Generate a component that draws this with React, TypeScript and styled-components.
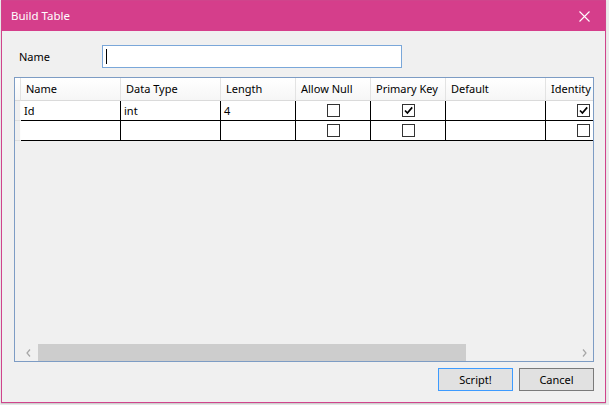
import React from 'react';
import styled, { createGlobalStyle } from 'styled-components';

const GlobalStyle = createGlobalStyle`
  html, body {
    margin: 0;
    padding: 0;
    background: #ececec;
  }
  body {
    font-family: 'Noto Sans', 'DejaVu Sans', sans-serif;
    font-size: 11px;
    color: #000;
  }
`;

interface IColumn {
  title: string;
  width: number;
  kind: 'text' | 'check';
  key: keyof IRow;
}

interface IRow {
  name: string;
  type: string;
  length: string;
  allowNull: boolean;
  primaryKey: boolean;
  defaultValue: string;
  identity: boolean;
}

const columns: IColumn[] = [
  { title: 'Name', width: 100, kind: 'text', key: 'name' },
  { title: 'Data Type', width: 100, kind: 'text', key: 'type' },
  { title: 'Length', width: 75, kind: 'text', key: 'length' },
  { title: 'Allow Null', width: 75, kind: 'check', key: 'allowNull' },
  { title: 'Primary Key', width: 75, kind: 'check', key: 'primaryKey' },
  { title: 'Default', width: 100, kind: 'text', key: 'defaultValue' },
  { title: 'Identity', width: 75, kind: 'check', key: 'identity' },
];

const rows: IRow[] = [
  { name: 'Id', type: 'int', length: '4', allowNull: false, primaryKey: true, defaultValue: '', identity: true },
  { name: '', type: '', length: '', allowNull: false, primaryKey: false, defaultValue: '', identity: false },
];

const CheckBox = ({ checked }: { checked: boolean }) => (
  <StyledCheckBox>
    {checked && (
      <svg width="11" height="11" viewBox="0 0 11 11">
        <path d="M2 5.5 L4.4 8 L9.2 2.4" fill="none" stroke="#000" strokeWidth="1.7" />
      </svg>
    )}
  </StyledCheckBox>
);

const Chevron = ({ dir }: { dir: 'left' | 'right' }) => (
  <svg width="5" height="8" viewBox="0 0 5 8">
    <path
      d={dir === 'left' ? 'M4 0.5 L1 4 L4 7.5' : 'M1 0.5 L4 4 L1 7.5'}
      fill="none"
      stroke="#a6a6a6"
      strokeWidth="1.2"
    />
  </svg>
);

export default function App() {
  const template = `6px ${columns.map((c) => `${c.width}px`).join(' ')}`;

  return (
    <>
      <GlobalStyle />
      <Screen>
        <Window>
          <TitleBar>
            <Title>Build Table</Title>
            <CloseButton>
              <svg width="11" height="11" viewBox="0 0 11 11">
                <path d="M0.5 0.5 L10.5 10.5 M10.5 0.5 L0.5 10.5" stroke="#fff" strokeWidth="1.1" />
              </svg>
            </CloseButton>
          </TitleBar>
          <Body>
            <FieldRow>
              <FieldLabel>Name</FieldLabel>
              <TextInput>
                <Caret />
              </TextInput>
            </FieldRow>

            <GridFrame>
              <GridViewport>
                <Table style={{ gridTemplateColumns: template }}>
                  <HeaderCell />
                  {columns.map((c) => (
                    <HeaderCell key={c.title}>{c.title}</HeaderCell>
                  ))}
                  {rows.map((row, i) => (
                    <React.Fragment key={i}>
                      <RowHeaderCell />
                      {columns.map((c) =>
                        c.kind === 'check' ? (
                          <Cell key={c.key} $center>
                            <CheckBox checked={row[c.key] as boolean} />
                          </Cell>
                        ) : (
                          <Cell key={c.key}>{row[c.key] as string}</Cell>
                        ),
                      )}
                    </React.Fragment>
                  ))}
                </Table>
              </GridViewport>
              <HScrollBar>
                <ArrowButton $width={23}>
                  <Chevron dir="left" />
                </ArrowButton>
                <Track>
                  <Thumb />
                </Track>
                <ArrowButton $width={17}>
                  <Chevron dir="right" />
                </ArrowButton>
              </HScrollBar>
            </GridFrame>

            <ButtonRow>
              <Button $primary>Script!</Button>
              <Button>Cancel</Button>
            </ButtonRow>
          </Body>
        </Window>
      </Screen>
    </>
  );
}

const Screen = styled.div`
  width: 609px;
  height: 405px;
  overflow: hidden;
  background: #ececec;
`;

const Window = styled.div`
  margin-left: 1px;
  width: 605px;
  height: 403px;
  box-sizing: border-box;
  border: 1px solid #d0448c;
  background: #f0f0f0;
  display: flex;
  flex-direction: column;
  box-shadow: 0 1px 1px rgba(0, 0, 0, 0.12);
`;

const TitleBar = styled.div`
  height: 30px;
  background: #d53e8b;
  display: flex;
  align-items: center;
  justify-content: space-between;
  padding-left: 9px;
`;

const Title = styled.div`
  color: #fff;
  font-size: 11.5px;
  padding-bottom: 2px;
`;

const CloseButton = styled.div`
  width: 26px;
  height: 30px;
  display: flex;
  align-items: center;
  justify-content: flex-start;
`;

const Body = styled.div`
  flex: 1;
  display: flex;
  flex-direction: column;
  padding: 14px 11px 11px 12px;
`;

const FieldRow = styled.div`
  display: flex;
  align-items: center;
  height: 23px;
  padding-left: 5px;
  margin-bottom: 9px;
`;

const FieldLabel = styled.div`
  width: 83px;
`;

const TextInput = styled.div`
  width: 300px;
  height: 23px;
  box-sizing: border-box;
  border: 1px solid #7aa7d9;
  background: #fff;
  display: flex;
  align-items: center;
  padding-left: 3px;
`;

const Caret = styled.div`
  width: 1px;
  height: 15px;
  background: #000;
`;

const GridFrame = styled.div`
  height: 285px;
  box-sizing: border-box;
  border: 1px solid #7d9cc4;
  background: #f0f0f0;
  display: flex;
  flex-direction: column;
`;

const GridViewport = styled.div`
  flex: 1;
  overflow: hidden;
`;

const Table = styled.div`
  display: grid;
  grid-auto-rows: auto;
  width: max-content;
`;

const HeaderCell = styled.div`
  height: 23px;
  box-sizing: border-box;
  padding: 0 0 1px 5px;
  display: flex;
  align-items: center;
  white-space: nowrap;
  overflow: hidden;
  background: linear-gradient(#ffffff, #f6f6f6);
  border-right: 1px solid #e3e3e3;
  border-bottom: 1px solid #dadada;
`;

const RowHeaderCell = styled.div`
  height: 20px;
  box-sizing: border-box;
  background: #f0f0f0;
  border-right: 1px solid #fdfdfd;
  border-bottom: 1px solid #dedede;
`;

const Cell = styled.div<{ $center?: boolean }>`
  height: 20px;
  box-sizing: border-box;
  background: #fff;
  border-right: 1px solid #000;
  border-bottom: 1px solid #000;
  padding-left: ${(p) => (p.$center ? 0 : 3)}px;
  display: flex;
  align-items: center;
  justify-content: ${(p) => (p.$center ? 'center' : 'flex-start')};
  white-space: nowrap;
  overflow: hidden;
`;

const StyledCheckBox = styled.div`
  width: 13px;
  height: 13px;
  box-sizing: border-box;
  border: 1px solid #333;
  background: #fff;
  display: flex;
  align-items: center;
  justify-content: center;
`;

const HScrollBar = styled.div`
  height: 17px;
  display: flex;
  background: #f0f0f0;
`;

const ArrowButton = styled.div<{ $width: number }>`
  width: ${(p) => p.$width}px;
  display: flex;
  align-items: center;
  justify-content: center;
  padding-left: ${(p) => (p.$width > 17 ? 4 : 0)}px;
  box-sizing: border-box;
`;

const Track = styled.div`
  flex: 1;
  display: flex;
`;

const Thumb = styled.div`
  width: 428px;
  background: #cdcdcd;
`;

const ButtonRow = styled.div`
  display: flex;
  justify-content: flex-end;
  gap: 6px;
  margin-top: 6px;
`;

const Button = styled.div<{ $primary?: boolean }>`
  width: 75px;
  height: 23px;
  box-sizing: border-box;
  border: 1px solid ${(p) => (p.$primary ? '#3d9bff' : '#7a7a7a')};
  background: #e1e1e1;
  display: flex;
  align-items: center;
  justify-content: center;
  padding-bottom: 1px;
`;
